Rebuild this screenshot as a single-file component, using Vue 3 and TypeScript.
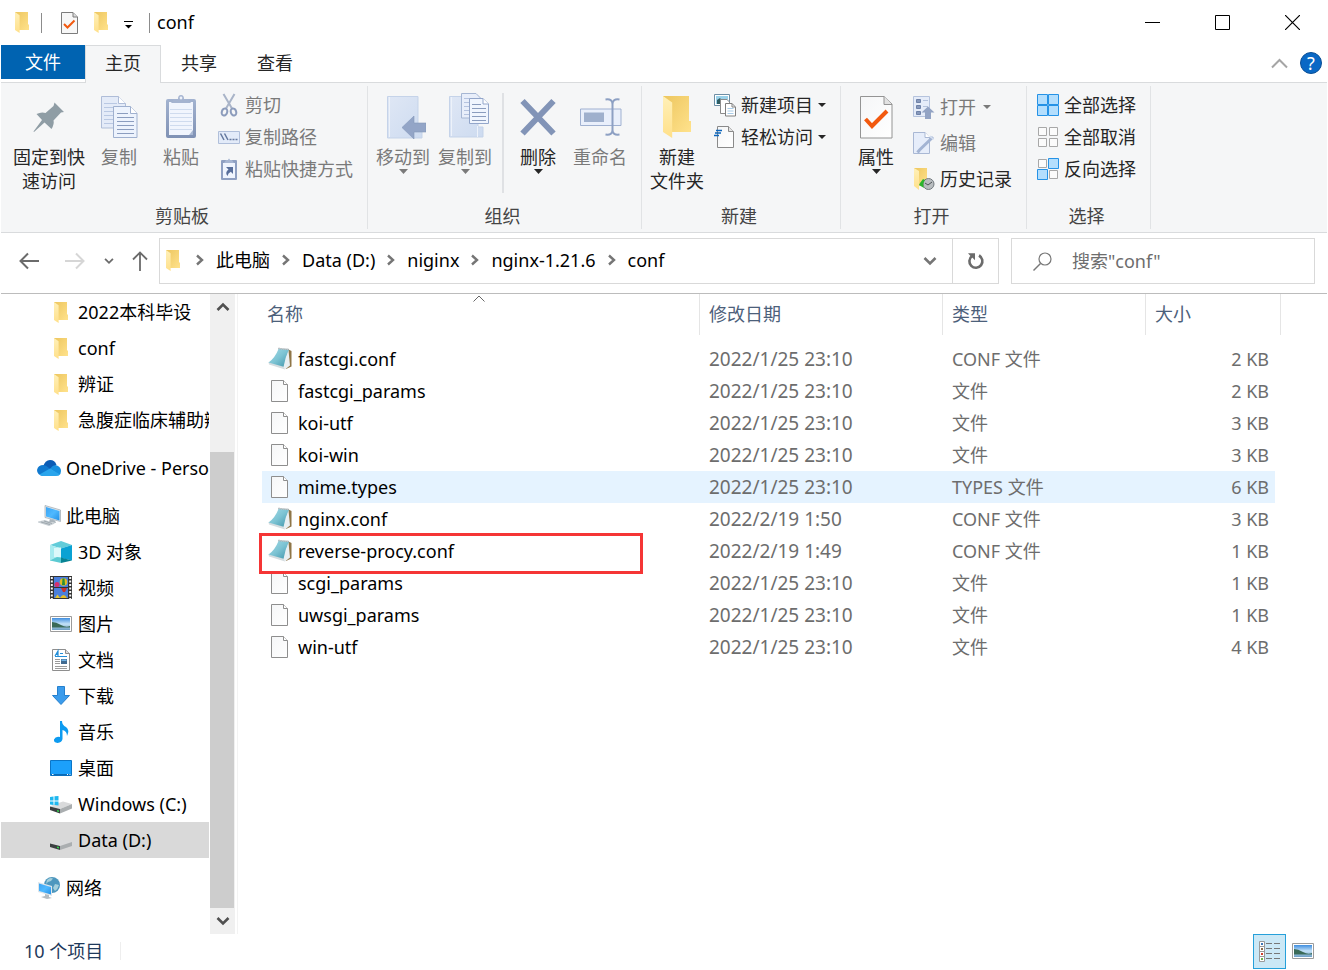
<script setup lang="ts">
import { ref } from 'vue'

interface BigCommand { icon: string; w: number; h: number; lines: string[]; disabled?: boolean; caret?: boolean; wide?: boolean; divider?: boolean }
interface SmallCommand { icon: string; text: string; disabled?: boolean; caret?: boolean }
interface Group { title: string; big: BigCommand[]; small: SmallCommand[]; loose?: boolean }
interface NavItem { icon: string; text: string; root?: boolean; gap?: boolean; selected?: boolean }
interface FileRow { name: string; date: string; type: string; size: string; notepad?: boolean; hover?: boolean; marked?: boolean }

const tabs = ['主页', '共享', '查看']
const activeTab = ref('主页')
const query = ref('')

const groups: Group[] = [
  {
    title: '剪贴板',
    big: [
      { icon: 'pin', w: 32, h: 32, lines: ['固定到快', '速访问'], wide: true },
      { icon: 'copy', w: 38, h: 44, lines: ['复制'], disabled: true },
      { icon: 'paste', w: 32, h: 44, lines: ['粘贴'], disabled: true },
    ],
    small: [
      { icon: 'cut', text: '剪切', disabled: true },
      { icon: 'path', text: '复制路径', disabled: true },
      { icon: 'shortcut', text: '粘贴快捷方式', disabled: true },
    ],
  },
  {
    title: '组织',
    big: [
      { icon: 'moveto', w: 46, h: 44, lines: ['移动到'], disabled: true, caret: true },
      { icon: 'copyto', w: 48, h: 50, lines: ['复制到'], disabled: true, caret: true },
      { icon: 'delete', w: 38, h: 38, lines: ['删除'], caret: true, divider: true },
      { icon: 'rename', w: 44, h: 40, lines: ['重命名'], disabled: true },
    ],
    small: [],
  },
  {
    title: '新建',
    big: [{ icon: 'folder', w: 28, h: 42, lines: ['新建', '文件夹'] }],
    small: [
      { icon: 'newitem', text: '新建项目', caret: true },
      { icon: 'easy', text: '轻松访问', caret: true },
    ],
  },
  {
    title: '打开',
    big: [{ icon: 'props', w: 34, h: 44, lines: ['属性'], caret: true }],
    small: [
      { icon: 'open', text: '打开', disabled: true, caret: true },
      { icon: 'edit', text: '编辑', disabled: true },
      { icon: 'history', text: '历史记录' },
    ],
    loose: true,
  },
  {
    title: '选择',
    big: [],
    small: [
      { icon: 'selall', text: '全部选择' },
      { icon: 'selnone', text: '全部取消' },
      { icon: 'selinv', text: '反向选择' },
    ],
  },
]

const crumbs = ['此电脑', 'Data (D:)', 'niginx', 'nginx-1.21.6', 'conf']

const nav: NavItem[] = [
  { icon: 'folder', text: '2022本科毕设' },
  { icon: 'folder', text: 'conf' },
  { icon: 'folder', text: '辨证' },
  { icon: 'folder', text: '急腹症临床辅助辨证' },
  { icon: 'onedrive', text: 'OneDrive - Personal', root: true, gap: true },
  { icon: 'pc', text: '此电脑', root: true, gap: true },
  { icon: 'cube', text: '3D 对象' },
  { icon: 'video', text: '视频' },
  { icon: 'picture', text: '图片' },
  { icon: 'document', text: '文档' },
  { icon: 'download', text: '下载' },
  { icon: 'music', text: '音乐' },
  { icon: 'desktop', text: '桌面' },
  { icon: 'drivec', text: 'Windows (C:)' },
  { icon: 'drive', text: 'Data (D:)', selected: true },
  { icon: 'network', text: '网络', root: true, gap: true },
]

const files: FileRow[] = [
  { name: 'fastcgi.conf', date: '2022/1/25 23:10', type: 'CONF 文件', size: '2 KB', notepad: true },
  { name: 'fastcgi_params', date: '2022/1/25 23:10', type: '文件', size: '2 KB' },
  { name: 'koi-utf', date: '2022/1/25 23:10', type: '文件', size: '3 KB' },
  { name: 'koi-win', date: '2022/1/25 23:10', type: '文件', size: '3 KB' },
  { name: 'mime.types', date: '2022/1/25 23:10', type: 'TYPES 文件', size: '6 KB', hover: true },
  { name: 'nginx.conf', date: '2022/2/19 1:50', type: 'CONF 文件', size: '3 KB', notepad: true },
  { name: 'reverse-procy.conf', date: '2022/2/19 1:49', type: 'CONF 文件', size: '1 KB', notepad: true, marked: true },
  { name: 'scgi_params', date: '2022/1/25 23:10', type: '文件', size: '1 KB' },
  { name: 'uwsgi_params', date: '2022/1/25 23:10', type: '文件', size: '1 KB' },
  { name: 'win-utf', date: '2022/1/25 23:10', type: '文件', size: '4 KB' },
]
</script>

<template>
  <div class="window">
    <svg class="sprite" width="0" height="0" aria-hidden="true">
      <defs>
        <linearGradient id="gFold" x1="0" x2="1" y1="0" y2="1"><stop offset="0" stop-color="#edc65f" /><stop offset="1" stop-color="#ffe28c" /></linearGradient>
        <linearGradient id="gFlap" x1="0" x2="0" y1="0" y2="1"><stop offset="0" stop-color="#fff0b8" /><stop offset="1" stop-color="#ffe08a" /></linearGradient>
        <linearGradient id="gPaper" x1="0" x2="1" y1="0" y2="1"><stop offset="0" stop-color="#f5f6f7" /><stop offset="1" stop-color="#fff" /></linearGradient>
        <linearGradient id="gPale" x1="0" x2="1" y1="0" y2="1"><stop offset="0" stop-color="#dfe7f5" /><stop offset="1" stop-color="#cddbf0" /></linearGradient>
        <linearGradient id="gNote" x1="0" x2="1" y1="0" y2="1"><stop offset="0" stop-color="#a5dce8" /><stop offset=".5" stop-color="#7cc3d3" /><stop offset="1" stop-color="#3f94aa" /></linearGradient>
        <linearGradient id="gClip" x1="0" x2="0" y1="0" y2="1"><stop offset="0" stop-color="#a3b3d0" /><stop offset="1" stop-color="#7f91b4" /></linearGradient>
        <linearGradient id="gSky" x1="0" x2="0" y1="0" y2="1"><stop offset="0" stop-color="#3f8ee0" /><stop offset=".5" stop-color="#c4e2f7" /><stop offset="1" stop-color="#6c9ec4" /></linearGradient>
        <linearGradient id="gScreen" x1="0" x2="1" y1="0" y2="1"><stop offset="0" stop-color="#3ba4f3" /><stop offset=".5" stop-color="#4fb9ff" /><stop offset="1" stop-color="#2490e6" /></linearGradient>
      </defs>
      <symbol id="folder" viewBox="0 0 14 21">
        <path d="M0 0H13V12.5H14V18H3.5L0 15z" fill="url(#gFold)" />
        <path d="M0 0L4.6 3.2V21L0 18z" fill="url(#gFlap)" />
      </symbol>
      <symbol id="pin" viewBox="0 0 32 32">
        <path d="M21.500 1.500L31 11L28 11.500L20.500 19.500Q21.500 23 18.500 28L11.500 21.500L1 31L0.500 30.500L9 19L3.500 13Q8.500 10.500 12.500 12L20.500 5z" fill="#8f9da5" />
      </symbol>
      <symbol id="copy" viewBox="0 0 38 44">
        <path d="M1.500 1.500H18.500L25.500 8.500V33H1.500z" fill="#e4ebf8" stroke="#afbdd8" />
        <path d="M18.500 1.500V8.500H25.500" fill="#fff" stroke="#afbdd8" />
        <path d="M4 8.500H17M4 12.500H22M4 16.500H15M4 20.500H13M4 24.500H13M4 28.500H13" stroke="#b9c8e3" />
        <path d="M13.500 11.500H30.500L37 18.500V42.500H13.500z" fill="#edf3fd" stroke="#9fb0cf" />
        <path d="M30.500 11.500V18.500H37" fill="#fff" stroke="#9fb0cf" />
        <path d="M17 18.500H28M17 22.500H34M17 26.500H34M17 30.500H34M17 34.500H34M17 38.500H34" stroke="#8b9dbf" />
      </symbol>
      <symbol id="paste" viewBox="0 0 32 44">
        <rect x="1" y="4" width="30" height="39" rx="2" fill="url(#gClip)" />
        <path d="M4 7H28V40H4z" fill="#f1f5fd" />
        <path d="M5 14.500H27M5 18.500H27M5 22.500H27M5 26.500H27M5 30.500H27M5 34.500H27" stroke="#cfdbee" />
        <path d="M6 8L9 4H13Q13 0 16 0T19 4H23L26 8z" fill="#a5b4d0" />
        <circle cx="16" cy="3" r="1.400" fill="#eef2fa" />
        <path d="M24 40L28 35V40z" fill="#a9b8d3" />
      </symbol>
      <symbol id="cut" viewBox="0 0 22 24">
        <path d="M5.500 1L14 15.500M16.500 1L8 15.500" stroke="#a9b4c8" stroke-width="2" />
        <ellipse cx="6.500" cy="19" rx="2.700" ry="3.600" transform="rotate(20 6.500 19)" fill="none" stroke="#8c9cbc" stroke-width="2" />
        <ellipse cx="15.500" cy="19" rx="2.700" ry="3.600" transform="rotate(-20 15.500 19)" fill="none" stroke="#8c9cbc" stroke-width="2" />
      </symbol>
      <symbol id="path" viewBox="0 0 22 24">
        <path d="M.500 6.500H21.500V18.500H.500z" fill="#e3ebf9" stroke="#b0bfda" />
        <path d="M2.500 8.500L6 15M6.500 8.500L10 15" stroke="#64789f" stroke-width="1.500" />
        <path d="M11.500 14.500H13.500M14.500 14.500H16.500M17.500 14.500H19.500" stroke="#64789f" stroke-width="1.500" />
      </symbol>
      <symbol id="shortcut" viewBox="0 0 22 24">
        <rect x="3" y="3" width="16" height="20" rx="1" fill="#8fa0c2" />
        <path d="M5 6H17V21H5z" fill="#f0f5fe" />
        <path d="M6 6L8 3H10Q11 0 12 3H14L16 6z" fill="#a7b6d2" />
        <path d="M8 10H15V17L12.800 14.800Q10 16 9.500 19Q6.500 15.500 10.500 12.500z" fill="#596f9b" />
      </symbol>
      <symbol id="moveto" viewBox="-4 0 46 44">
        <path d="M3.500 1.500H34V33L38 36V43H3.500z" fill="url(#gPale)" stroke="#c5d3e9" />
        <path d="M5.500 2V42" stroke="#edf2fa" />
        <path d="M18 32.500L30 21V28H42V37H30V44z" fill="#93a5c7" stroke="#8497bb" stroke-width=".600" />
      </symbol>
      <symbol id="copyto" viewBox="-6 0 48 50">
        <path d="M2.500 4.500H31V35H36V45H2.500z" fill="url(#gPale)" stroke="#c5d3e9" />
        <path d="M4.500 5V44M30.500 34V45" stroke="#edf2fa" />
        <path d="M14.500 1.500H29L34 6.500V26H14.500z" fill="#e8eefa" stroke="#a6b6d3" />
        <path d="M17 6.500H28M17 10.500H26M17 14.500H22M17 18.500H22M17 22.500H22" stroke="#b5c3df" />
        <path d="M22.500 6.500H36L41.500 12V31.500H22.500z" fill="#f0f5fe" stroke="#93a6ca" />
        <path d="M36 6.500V12H41.500" fill="#fff" stroke="#93a6ca" />
        <path d="M25 12.500H34M25 16.500H39M25 20.500H39M25 24.500H39M25 28.500H39" stroke="#8a9cbe" />
      </symbol>
      <symbol id="delete" viewBox="0 0 38 38">
        <path d="M3.500 3L34.500 35.500M34.500 3L3.500 35.500" stroke="#8294b7" stroke-width="6" />
      </symbol>
      <symbol id="rename" viewBox="0 0 44 40">
        <path d="M2.500 12H43V28.500H2.500z" fill="#e9effb" stroke="#a0b1d1" />
        <path d="M6 15.500H26V25H6z" fill="#9fb0cd" />
        <path d="M27.500 2.500Q34.500 1.500 34.500 7V33Q34.500 38.500 27.500 37.500M41.500 2.500Q34.500 1.500 34.500 7M41.500 37.500Q34.500 38.500 34.500 33" fill="none" stroke="#8da0c3" stroke-width="2" />
      </symbol>
      <symbol id="newitem" viewBox="0 0 22 24">
        <path d="M.500 1.500H15.500V12.500H.500z" fill="#fff" stroke="#6d8ea5" />
        <path d="M2 3H14V11H2z" fill="#9bd2ea" />
        <path d="M3 11V7L6 5L8 8V11z" fill="#2e5c63" />
        <path d="M6.500 6.500H13L15.500 9V20.500H6.500z" fill="#fff" stroke="#8b8b8b" />
        <path d="M11.500 10.500H18L21.500 14V23H11.500z" fill="#fff" stroke="#808080" />
        <path d="M18 10.500V14H21" fill="none" stroke="#808080" />
        <path d="M13.500 15.500H19.500M13.500 18H19.500M13.500 20.500H19.500" stroke="#a9cce8" />
      </symbol>
      <symbol id="easy" viewBox="0 0 22 24">
        <path d="M3.500 1.500H14.500L19.500 6.500V22.500H3.500z" fill="url(#gPaper)" stroke="#8a8a8a" />
        <path d="M14.500 1.500V6.500H19.500" fill="#e4e4e4" stroke="#8a8a8a" />
        <path d="M2 5.500H8M1 8H7M0 10.500H5" stroke="#0d65bb" stroke-width="1.300" />
      </symbol>
      <symbol id="props" viewBox="0 0 34 44">
        <path d="M1.500 1.500H25L33 9V43H1.500z" fill="url(#gPaper)" stroke="#949494" />
        <path d="M25 1.500V9.500H33" fill="#e2e2e2" stroke="#949494" />
        <path d="M6.500 24L13 31L28 16" fill="none" stroke="#f2590f" stroke-width="4" />
      </symbol>
      <symbol id="proptiny" viewBox="0 0 18 22">
        <path d="M1.500 .500H13L17.500 5V21.500H1.500z" fill="#f7f7f7" stroke="#7c7c7c" />
        <path d="M13 .700V5H17.300" fill="#ddd" stroke="#7c7c7c" />
        <path d="M4 12L7.500 15.500L14.500 8.500" fill="none" stroke="#f2590f" stroke-width="2" />
      </symbol>
      <symbol id="open" viewBox="0 0 22 24">
        <path d="M.500 1.500H16.500V21.500H.500z" fill="#e5ecf9" stroke="#b5c3dd" />
        <path d="M3.500 4.500H7.500V7.500H3.500zM3.500 10.500H7.500V13.500H3.500zM3.500 16.500H7.500V19.500H3.500z" fill="#8799bc" stroke="#6f82a8" />
        <path d="M10 5.500H15M10 11.500H15" stroke="#b4c2dc" />
        <path d="M15 11.500L21.500 17.500H18V24H12V17.500H8.500z" fill="#92a3c4" />
      </symbol>
      <symbol id="edit" viewBox="0 0 22 24">
        <path d="M.500 1.500H12L16.500 6.500V22.500H.500z" fill="#e6edfa" stroke="#a9b8d4" />
        <path d="M12 1.500V6.500H17" fill="#fff" stroke="#a9b8d4" />
        <path d="M20 6L6.500 19L4.500 21.500" fill="none" stroke="#a3b4d3" stroke-width="3" />
        <path d="M17 5L20.500 8.500" stroke="#d4deef" stroke-width="1.500" />
      </symbol>
      <symbol id="history" viewBox="0 0 22 24">
        <path d="M1 1H14V19H6L1 18z" fill="url(#gFold)" />
        <path d="M1 1L6 4V23L1 19z" fill="url(#gFlap)" />
        <circle cx="15.500" cy="17" r="5.500" fill="#b9bdc0" stroke="#747b80" />
        <path d="M12 16L15 18L19 15" fill="none" stroke="#4d5356" />
        <path d="M7 16L10 12L12 13Q9 17 11 21L6 18z" fill="#2ab52d" />
      </symbol>
      <symbol id="selall" viewBox="0 0 22 24">
        <path d="M.500 1.500H10.500V11.500H.500zM11.500 1.500H21.500V11.500H11.500zM.500 12.500H10.500V22.500H.500zM11.500 12.500H21.500V22.500H11.500z" fill="#b3defd" stroke="#2592e6" />
      </symbol>
      <symbol id="selnone" viewBox="0 0 22 24">
        <path d="M1.500 2.500H9.500V10.500H1.500zM12.500 2.500H20.500V10.500H12.500zM1.500 13.500H9.500V21.500H1.500zM12.500 13.500H20.500V21.500H12.500z" fill="#fbfbfb" stroke="#a8a8a8" />
      </symbol>
      <symbol id="selinv" viewBox="0 0 22 24">
        <path d="M1.500 2.500H9.500V10.500H1.500zM12.500 13.500H20.500V21.500H12.500z" fill="#fbfbfb" stroke="#a8a8a8" />
        <path d="M11.500 1.500H21.500V11.500H11.500zM.500 12.500H10.500V22.500H.500z" fill="#b3defd" stroke="#2592e6" />
      </symbol>
      <symbol id="onedrive" viewBox="0 0 24 24">
        <path d="M6 11Q8 4 13 4Q18 4 19.500 9L12 14z" fill="#0b5cb5" />
        <path d="M6 20Q0 19 0 14Q1 9 6.500 9Q9 9 12 12L15 16z" fill="#1079cf" />
        <path d="M13 13Q16 8 20 9.500Q24 11 24 15Q24 18 22 19z" fill="#1790df" />
        <path d="M2.500 18.500L13 12.500L23 18.500Q22 20 19 20H6Q4 20 2.500 18.500z" fill="#2aa5ec" />
      </symbol>
      <symbol id="pc" viewBox="0 0 24 24">
        <path d="M8 1.500L23.500 6V17.500L8 13.500z" fill="#e2e7eb" stroke="#8d9aa4" stroke-width=".600" />
        <path d="M9 3L22.500 7V16.500L9 12.500z" fill="url(#gScreen)" />
        <path d="M13 15L18 16.500L19 19L12 18z" fill="#aab4bb" />
        <path d="M1 17.500L8 16L18 19.500L12 22L1 18.500z" fill="#c7ced3" />
        <path d="M4 18L13 20.500M7 17L15 19.500" stroke="#8d979e" stroke-width=".700" />
      </symbol>
      <symbol id="cube" viewBox="0 0 24 24">
        <path d="M1 5L12 1L23 5L12 8.500z" fill="#62ccd9" />
        <path d="M1 5L12 8.500V18L1 21z" fill="#a7ebf0" />
        <path d="M12 8.500L23 5V20.500L12 18z" fill="#0aa2d3" />
        <path d="M5 8L12 7.500V18L5 17z" fill="#dcf8fa" />
        <path d="M1 20.500L8 17L12 17.500V23z" fill="#5bcad2" /><path d="M23 20.500L12 17.500V23z" fill="#078394" />
      </symbol>
      <symbol id="video" viewBox="0 0 24 24">
        <path d="M1 0H23V23H1z" fill="#333" /><path d="M5 1H19V11H5zM5 12H19V22H5z" fill="#4a7fdc" />
        <path d="M2.800 1V23M21.200 1V23" stroke="#f7f7f7" stroke-width="2" stroke-dasharray="2 1.500" />
        <circle cx="14.500" cy="6" r="3.800" fill="#e2bb22" /><path d="M13.500 2.500H15.500L16 9H13z" fill="#2b8f37" />
        <circle cx="8" cy="8.500" r="2.500" fill="#d52f6f" /><path d="M12 12H18L16 16H14z" fill="#c8312c" />
        <path d="M11 22Q14.500 16 18 22z" fill="#e6bd24" /><path d="M6 22L8.500 18.500L11 22z" fill="#e9c52b" />
      </symbol>
      <symbol id="picture" viewBox="0 0 24 24">
        <path d="M1.500 4.500H22.500V19.500H1.500z" fill="#fff" stroke="#9b9b9b" />
        <path d="M3 6H21V18H3z" fill="url(#gSky)" /><path d="M3 10Q7 10 12 13T21 14V15.500H3z" fill="#3a6a58" />
      </symbol>
      <symbol id="document" viewBox="0 0 24 24">
        <path d="M3.500 1.500H16.500L20.500 5.500V22.500H3.500z" fill="#fff" stroke="#8e8e8e" />
        <path d="M16.500 1.500V5.500H20.500" fill="#ddd" stroke="#8e8e8e" />
        <path d="M6 8L9 3V8M7 6.500H9M11 5.500H14" fill="none" stroke="#248ed8" stroke-width="1.200" />
        <path d="M6 8.500H18" stroke="#248ed8" /><path d="M6 11.500H11M6 13.500H11M6 15.500H11M6 18.500H18M6 20.500H18" stroke="#9b9b9b" />
        <path d="M12 11H18V16H12z" fill="#426b91" /><path d="M12.500 11.500H17.500V13H12.500z" fill="#73b6e7" />
      </symbol>
      <symbol id="download" viewBox="0 0 24 24"><path d="M8.500 2.500H15.500V11.500H20.500L12 20.500L3.500 11.500H8.500z" fill="#3b9cec" stroke="#2580ce" /></symbol>
      <symbol id="music" viewBox="0 0 24 24"><path d="M11 1H13Q13 5 17 7Q21 10 18 16Q18 11 13.500 10V19Q13 22.500 8.500 23Q4.500 22.500 5 19.500Q6.500 16 11 17z" fill="#0d9bf0" /></symbol>
      <symbol id="desktop" viewBox="0 0 24 24">
        <path d="M1.500 4.500H22.500V19.500H1.500z" fill="#1ca0fb" stroke="#0a75c7" />
        <path d="M2 18H22V19.500H2z" fill="#0a6ab5" /><path d="M3 18.500H4.500M18 18.500H19M20.500 18.500H21.500" stroke="#fff" />
      </symbol>
      <symbol id="drive" viewBox="0 0 24 24">
        <path d="M1 15.500L12 11.500L23 14L11 18z" fill="#d9dadb" /><path d="M1 15.500L11 18V22L1 19z" fill="#3b3f41" />
        <path d="M11 18L23 14V18L11 22z" fill="#aaaeb0" /><path d="M8 18.500L10 19V20.500L8 20z" fill="#31d24b" />
      </symbol>
      <symbol id="drivec" viewBox="0 0 24 24">
        <path d="M5 12.500L14 9.500L23 12L11 17L1 14.500z" fill="#d9dadb" /><path d="M1 14.500L11 17V21.500L1 18z" fill="#3b3f41" />
        <path d="M11 17L23 12V16.500L11 21.500z" fill="#aaaeb0" /><path d="M8 18L10 18.500V20L8 19.500z" fill="#31d24b" />
        <path d="M1 5L4.500 4.500V8.500H1zM5.500 4.300L9.500 4V8.500H5.500zM1 9.500H4.500V13L1 12.500zM5.500 9.500H9.500V13.500L5.500 13z" fill="#1fb7ef" />
      </symbol>
      <symbol id="network" viewBox="0 0 24 24">
        <circle cx="15" cy="9" r="8" fill="#4d97be" /><path d="M10 4Q13 1 16 2.500L14 5L11 6L9 8zM18 8L22 9Q21 13 18 15L16 12z" fill="#a5d0dc" />
        <path d="M1 6L15 10V20L1 16z" fill="#dfe6eb" /><path d="M2 7.500L14 11V18.500L2 15z" fill="url(#gScreen)" />
        <path d="M8 18L12 19V21L15 22L10 23L4 21L8 20z" fill="#b3bcc2" />
      </symbol>
      <symbol id="page" viewBox="0 0 24 24">
        <path d="M3.500 1.500H15.500L19.500 5.500V22.500H3.500z" fill="url(#gPaper)" stroke="#8e8e8e" />
        <path d="M15.500 1.500V5.500H19.500" fill="#fff" stroke="#8e8e8e" />
      </symbol>
      <symbol id="notepad" viewBox="0 0 24 24">
        <path d="M20.500 2.500L23.500 4V19.500L18 22L17 19z" fill="#8f7648" />
        <path d="M.500 15L1 17.500L17 22.500L18 19z" fill="#d5dde0" />
        <path d="M10.500 2L21 3Q18 10 16.500 20L.500 15.500Q7 11 10.500 2z" fill="url(#gNote)" />
        <path d="M20.500 3.500L22 18.500L17 22.500L15.500 20Q17 11 20.500 3.500z" fill="#e9eff2" />
        <path d="M10.500 1.500L21 2.500" stroke="#78868c" stroke-width="1.500" stroke-dasharray="1 1" />
      </symbol>
      <symbol id="details" viewBox="0 0 24 24">
        <path d="M1.500 2.500H6.500V22.500H1.500zM1.500 7.500H6.500M1.500 12.500H6.500M1.500 17.500H6.500" fill="#fff" stroke="#9a9a9a" />
        <path d="M3 4H5V6H3z" fill="#3c78b8" /><path d="M3 9H5V11H3z" fill="#8b6c4a" /><path d="M3 14H5V16H3z" fill="#d13f2f" /><path d="M3 19H5V21H3z" fill="#6eb24d" />
        <path d="M8 4.500H14M16 4.500H22M8 9.500H14M16 9.500H22M8 14.500H14M16 14.500H22M8 19.500H14M16 19.500H22" stroke="#777" />
      </symbol>
      <symbol id="crumb" viewBox="0 0 10 12"><path d="M2 1.500L7 6L2 10.500" fill="none" stroke="#757575" stroke-width="2.400" /></symbol>
      <symbol id="down" viewBox="0 0 14 10"><path d="M1.500 2L7 7.500L12.500 2" fill="none" stroke="currentColor" stroke-width="2.600" /></symbol>
    </svg>

    <header class="titlebar">
      <svg class="t-folder" width="14" height="21"><use href="#folder" /></svg>
      <i class="bar first" />
      <button class="qa doc" aria-label="属性"><svg width="18" height="22"><use href="#proptiny" /></svg></button>
      <button class="qa fold" aria-label="新建文件夹"><svg width="14" height="21"><use href="#folder" /></svg></button>
      <button class="qa more" aria-label="自定义快速访问工具栏">
        <svg width="9" height="8" viewBox="0 0 9 8"><path d="M0 .500H9" stroke="#000" /><path d="M1 4H8L4.500 7.500z" fill="#000" /></svg>
      </button>
      <i class="bar" />
      <h1>conf</h1>
      <div class="winbtns">
        <button aria-label="最小化"><svg width="15" height="15"><path d="M0 7.500H15" stroke="#000" /></svg></button>
        <button aria-label="最大化"><svg width="15" height="15"><path d="M.500 .500H14.500V14.500H.500z" fill="none" stroke="#000" /></svg></button>
        <button aria-label="关闭"><svg width="15" height="15"><path d="M0 0L15 15M15 0L0 15" stroke="#000" stroke-width="1.200" /></svg></button>
      </div>
    </header>

    <nav class="tabs">
      <button class="file">文件</button>
      <button v-for="t in tabs" :key="t" class="tab" :class="{ active: activeTab === t }" @click="activeTab = t">{{ t }}</button>
      <div class="tabs-right">
        <button class="fold-ribbon" aria-label="最小化功能区"><svg width="17" height="11" viewBox="0 0 17 11"><path d="M1 9.500L8.500 2L16 9.500" fill="none" stroke="#a5a5a5" stroke-width="2" /></svg></button>
        <button class="help" aria-label="帮助">?</button>
      </div>
    </nav>

    <section class="ribbon">
      <div v-for="g in groups" :key="g.title" class="group">
        <div class="group-body" :class="{ tight: !g.small.length }">
          <button v-for="b in g.big" :key="b.icon" class="big" :class="{ off: b.disabled, wide: b.wide, divided: b.divider }">
            <span class="big-icon"><svg :width="b.w" :height="b.h"><use :href="'#' + b.icon" /></svg></span>
            <span v-for="l in b.lines" :key="l" class="big-line">{{ l }}</span>
            <svg v-if="b.caret" class="caret" width="9" height="5"><path d="M0 0H9L4.500 5z" fill="currentColor" /></svg>
          </button>
          <div v-if="g.small.length" class="small-list" :class="{ loose: g.loose }">
            <button v-for="s in g.small" :key="s.icon" class="small" :class="{ off: s.disabled }">
              <svg width="22" height="24"><use :href="'#' + s.icon" /></svg>
              <span>{{ s.text }}</span>
              <svg v-if="s.caret" width="8" height="4"><path d="M0 0H8L4 4z" fill="currentColor" /></svg>
            </button>
          </div>
        </div>
        <div class="group-title">{{ g.title }}</div>
      </div>
    </section>

    <section class="address">
      <div class="history">
        <button aria-label="后退"><svg width="20" height="18" viewBox="0 0 20 18"><path d="M20 9H2M9 1.500L1.500 9L9 16.500" fill="none" stroke="#6b6b6b" stroke-width="2" /></svg></button>
        <button aria-label="前进"><svg width="20" height="18" viewBox="0 0 20 18"><path d="M0 9H18M11 1.500L18.500 9L11 16.500" fill="none" stroke="#d6d6d6" stroke-width="2" /></svg></button>
        <button class="recent" aria-label="最近浏览的位置"><svg width="10" height="8"><use href="#down" /></svg></button>
        <button class="up" aria-label="上移"><svg width="16" height="20" viewBox="0 0 16 20"><path d="M8 20V2M1 8.500L8 1.500L15 8.500" fill="none" stroke="#6b6b6b" stroke-width="1.800" /></svg></button>
      </div>
      <div class="pathbox">
        <div class="crumbs">
          <svg class="path-folder" width="14" height="21"><use href="#folder" /></svg>
          <template v-for="c in crumbs" :key="c">
            <svg class="crumb-sep" width="10" height="12"><use href="#crumb" /></svg>
            <button class="crumb">{{ c }}</button>
          </template>
        </div>
        <button class="drop" aria-label="以前的位置"><svg width="14" height="10"><use href="#down" /></svg></button>
        <button class="refresh" aria-label="刷新">
          <svg width="18" height="18" viewBox="0 0 18 18"><path d="M12 3.500A6.500 6.500 0 1 1 5 4" fill="none" stroke="#6b6b6b" stroke-width="2.600" /><path d="M1 1.200H8V8.200L6 6.200L3 3.500z" fill="#6b6b6b" /></svg>
        </button>
      </div>
      <label class="search">
        <svg width="19" height="19" viewBox="0 0 19 19"><circle cx="12" cy="7" r="6" fill="none" stroke="#777" stroke-width="1.200" /><path d="M7.500 11.500L.500 18.500" stroke="#777" stroke-width="1.400" /></svg>
        <input v-model="query" type="text" placeholder="搜索&quot;conf&quot;" aria-label="搜索" />
      </label>
    </section>

    <div class="content">
      <aside class="tree">
        <a v-for="(n, i) in nav" :key="i" href="#" class="node" :class="{ root: n.root, gap: n.gap, selected: n.selected }">
          <svg v-if="n.icon === 'folder'" width="24" height="21"><use href="#folder" /></svg>
          <svg v-else width="24" height="24"><use :href="'#' + n.icon" /></svg>
          <span>{{ n.text }}</span>
        </a>
      </aside>
      <div class="scroll">
        <button aria-label="向上滚动"><svg width="14" height="10" viewBox="0 0 14 10"><path d="M1.500 8L7 2.500L12.500 8" fill="none" stroke="currentColor" stroke-width="2.600" /></svg></button>
        <i class="track" />
        <i class="thumb" />
        <button aria-label="向下滚动"><svg width="14" height="10"><use href="#down" /></svg></button>
      </div>
      <main class="files">
        <table>
          <colgroup><col /><col class="c-date" /><col class="c-type" /><col class="c-size" /></colgroup>
          <thead>
            <tr>
              <th class="name">名称<svg class="sort" width="12" height="7" viewBox="0 0 12 7"><path d="M.500 6.500L6 1L11.500 6.500" fill="none" stroke="#666" /></svg></th>
              <th>修改日期</th>
              <th>类型</th>
              <th>大小</th>
            </tr>
          </thead>
          <tbody>
            <tr v-for="f in files" :key="f.name" :class="{ hover: f.hover }">
              <td class="name">
                <div class="fname"><svg width="24" height="24"><use :href="f.notepad ? '#notepad' : '#page'" /></svg><span>{{ f.name }}</span></div>
                <i v-if="f.marked" class="mark" />
              </td>
              <td class="date">{{ f.date }}</td>
              <td>{{ f.type }}</td>
              <td class="size">{{ f.size }}</td>
            </tr>
          </tbody>
        </table>
      </main>
    </div>

    <footer class="status">
      <span>10 个项目</span>
      <i class="stat-sep" />
      <div class="views">
        <button class="on" aria-label="详细信息"><svg width="24" height="24"><use href="#details" /></svg></button>
        <button aria-label="大缩略图"><svg width="24" height="24"><use href="#picture" /></svg></button>
      </div>
    </footer>
  </div>
</template>

<style>
body { margin: 0; background: #fff; }
</style>

<style scoped>
.window { min-height: 100vh; display: flex; flex-direction: column; background: #fff; color: #000; font: 18px/24px "Noto Sans", "Noto Sans CJK SC", sans-serif; box-sizing: border-box; padding: 0 1px; }
.window *, .window *::before { box-sizing: border-box; }
.sprite { position: absolute; }
svg { display: block; flex: none; }
button { font: inherit; color: inherit; background: none; border: 0; padding: 0; margin: 0; }

.titlebar { height: 45px; display: flex; align-items: center; padding-left: 14px; }
.bar { width: 1px; height: 20px; background: #8c8c8c; }
.bar.first { margin-left: 12px; }
.qa.doc { margin-left: 18px; }
.qa.fold { margin-left: 16px; }
.qa.more { margin: 4px 16px 0; }
h1 { font-size: 18px; line-height: 24px; font-weight: 400; margin: 0 0 2px 7px; }
.winbtns { margin-left: auto; display: flex; align-self: stretch; }
.winbtns button { width: 70px; display: flex; align-items: center; justify-content: center; }

.tabs { height: 38px; display: flex; align-items: flex-start; border-bottom: 1px solid #d9dbdd; }
.file { width: 84px; height: 34px; background: #0063b1; color: #fff; }
.tab { width: 76px; height: 38px; padding-bottom: 3px; color: #262626; border: 1px solid transparent; border-bottom: 0; }
.tab.active { background: #f5f6f7; border-color: #d9dbdd; }
.tabs-right { margin-left: auto; display: flex; align-items: center; gap: 12px; height: 36px; padding-right: 5px; }
.help { width: 22px; height: 22px; border-radius: 50%; background: #0968c5; border: 1px solid #0a4f96; color: #fff; line-height: 20px; }

.ribbon { display: flex; height: 150px; padding: 3px 0; background: #f5f6f7; border-bottom: 1px solid #d9dbdd; overflow: hidden; }
.group { border-right: 1px solid #e1e3e5; }
.group-body { display: flex; height: 118px; padding: 0 14px 0 4px; }
.group-body.tight { padding-right: 10px; }
.group:first-child .group-body { padding-left: 9px; }
.group-title { text-align: center; padding-right: 4px; color: #444; }
.big { width: 62px; display: flex; flex-direction: column; align-items: center; padding-top: 7px; color: #262626; white-space: nowrap; position: relative; }
.big.wide { width: 78px; }
.big.divided { margin-left: 11px; }
.big.divided::before { content: ""; position: absolute; left: -5px; top: 7px; width: 2px; height: 100px; background: #dfe1e4; }
.big-icon { height: 48px; display: flex; align-items: center; margin-bottom: 4px; }
.big-line { height: 24px; }
.small-list { padding-top: 3px; margin-left: 6px; }
.small { display: flex; align-items: center; height: 32px; gap: 5px; color: #262626; white-space: nowrap; }
.loose .small { height: 36px; }
.loose .small span + svg { margin-left: 2px; }
.big.off, .small.off { color: #7a7a7a; }

.address { height: 61px; display: flex; align-items: center; padding: 0 12px 4px 0; border-bottom: 1px solid #bcbcbc; }
.history { width: 158px; flex: none; display: flex; align-items: center; padding-left: 18px; }
.history button + button { margin-left: 26px; }
.history button.recent { margin-left: 19px; color: #6b6b6b; }
.history button.up { margin-left: 18px; }
.pathbox { flex: 1; min-width: 0; height: 46px; border: 1px solid #d9d9d9; display: flex; align-items: center; padding-left: 6px; }
.crumbs { display: flex; align-items: center; padding-bottom: 2px; }
.path-folder { margin-right: 4px; }
.crumb-sep { margin: 0 11px; }
.drop { margin-left: auto; width: 44px; height: 44px; display: grid; place-items: center; color: #757575; }
.refresh { width: 46px; height: 44px; border-left: 1px solid #d9d9d9; display: grid; place-items: center; }
.search { width: 304px; height: 46px; margin-left: 12px; border: 1px solid #d9d9d9; display: flex; align-items: center; padding-left: 21px; gap: 20px; }
.search input { flex: 1; min-width: 0; border: 0; outline: 0; padding: 0; background: none; font: inherit; color: #333; }
.search input::placeholder { color: #6d6d6d; opacity: 1; }

.content { flex: 1; display: flex; min-height: 0; }
.tree { width: 208px; flex: none; overflow: hidden; }
.node { height: 36px; display: flex; align-items: center; gap: 5px; padding-left: 48px; white-space: nowrap; color: #000; text-decoration: none; overflow: hidden; }
.node.root { padding-left: 36px; }
.node.gap { margin-top: 12px; }
.node.selected { background: #d9d9d9; }
.scroll { width: 25px; margin-left: 1px; display: flex; flex-direction: column; background: #f0f0f0; }
.scroll button { height: 26px; display: grid; place-items: center; color: #505050; }
.track { flex: 132; }
.thumb { flex: 456; background: #cdcdcd; margin-right: 1px; }
.files { flex: 1; min-width: 0; margin-left: 2px; border-left: 1px solid #f3f3f3; padding: 0 46px 28px 24px; }
table { width: 100%; table-layout: fixed; border-collapse: separate; border-spacing: 0; }
.c-date { width: 243px; }
.c-type { width: 203px; }
.c-size { width: 135px; }
th { height: 41px; padding: 0 9px 2px; text-align: left; font-weight: 400; color: #4c607a; border-right: 1px solid #e5e5e5; }
th.name { position: relative; padding-left: 5px; }
.sort { position: absolute; left: 50%; top: 1px; margin-left: -8px; }
tbody::before { content: ""; display: block; height: 8px; }
td { height: 32px; padding: 0 9px; color: #6d6d6d; white-space: nowrap; }
td.name { position: relative; padding-left: 6px; color: #000; }
.fname { display: flex; align-items: center; gap: 6px; }
.date { font-size: 19px; }
td.size { text-align: right; padding-right: 6px; border-right: 6px solid transparent; background-clip: padding-box; }
.hover td { background-color: #e5f3ff; }
.mark { position: absolute; left: -3px; top: -2px; width: 384px; height: 41px; border: 3px solid #f53535; z-index: 1; }

.status { height: 36px; display: flex; align-items: center; padding: 0 12px 2px 23px; color: #1e395b; }
.stat-sep { width: 1px; height: 18px; margin-left: 17px; background: #eee; }
.views { margin-left: auto; display: flex; align-items: center; gap: 5px; }
.views button { width: 24px; height: 35px; display: grid; place-items: center; }
.views .on { width: 33px; border: 1px solid #26a0da; background: #cbe8f6; }
</style>
